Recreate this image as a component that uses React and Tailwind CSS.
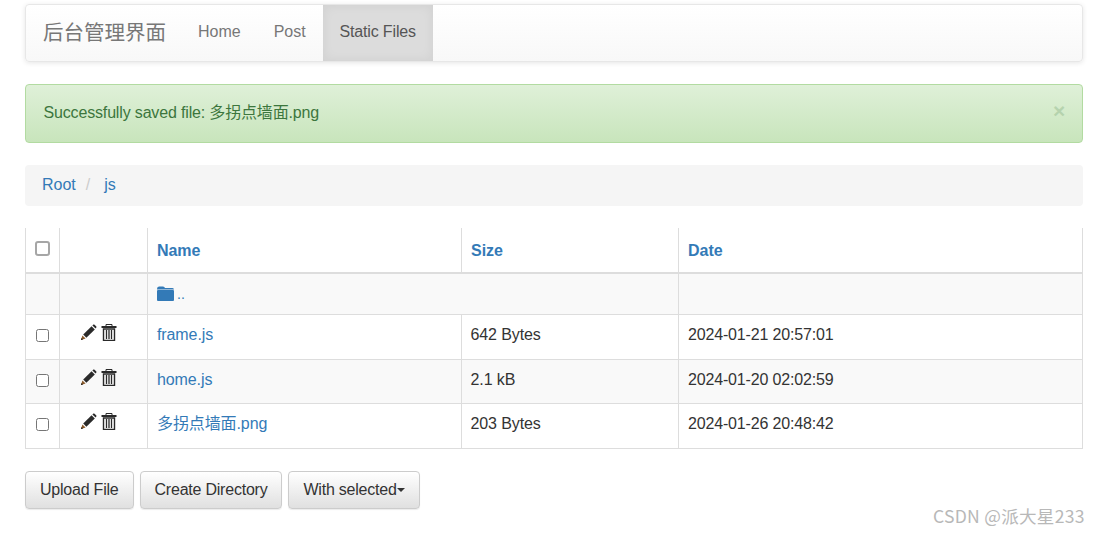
function Pencil() {
  return (
    <svg width="17" height="17" viewBox="0 0 17 17" className="block">
      <path d="M1 16 L2.4 11.4 L5.6 14.6 Z" fill="#8a5a2b" />
      <path d="M1 16 L1.6 14 L3 15.4 Z" fill="#111" />
      <path d="M3.2 10.6 L11.6 2.2 L14.8 5.4 L6.4 13.8 Z" fill="#2a2a2a" />
      <path d="M12.4 1.4 L13.4 0.6 Q14 0.2 14.6 0.7 L16.3 2.4 Q16.8 3 16.3 3.6 L15.6 4.6 Z" fill="#2a2a2a" />
    </svg>
  );
}

function Trash() {
  return (
    <svg width="16" height="17" viewBox="0 0 16 17" className="block">
      <path d="M5 2 V0.5 H11 V2" fill="none" stroke="#2a2a2a" strokeWidth="1" />
      <rect x="0.5" y="2" width="15" height="2" fill="#2a2a2a" />
      <path d="M2.5 5 H13.5 V16.5 H2.5 Z" fill="none" stroke="#2a2a2a" strokeWidth="1.4" />
      <path d="M5.5 6 V15 M8 6 V15 M10.5 6 V15" stroke="#2a2a2a" strokeWidth="1.3" />
    </svg>
  );
}

function Folder() {
  return (
    <svg width="17" height="15" viewBox="0 0 17 15" className="block">
      <path d="M0 3 Q0 0.5 2 0.5 H6 Q7.5 0.5 8 2 H15.5 Q17 2 17 3.5 H0 Z" fill="#337ab7" />
      <rect x="0" y="4" width="17" height="11" rx="1" fill="#337ab7" />
    </svg>
  );
}

function Check({ big }) {
  return (
    <input
      type="checkbox"
      className={
        big
          ? "block appearance-none w-[15px] h-[15px] rounded-[3px] border-2 border-[#a6a6a6] bg-white mx-auto"
          : "block appearance-none w-[13px] h-[13px] rounded-[2.5px] border border-[#767676] bg-white mx-auto"
      }
    />
  );
}

function Row({ name, size, date, striped, height, textPad }) {
  return (
    <tr className={striped ? "bg-[#f9f9f9]" : "bg-white"} style={{ height }}>
      <td className="border border-[#dddddd] align-middle pb-[2px]"><Check /></td>
      <td className="border border-[#dddddd] align-middle">
        <div className="flex justify-center gap-[4px] -mt-[8px] pr-[11px]">
          <Pencil />
          <Trash />
        </div>
      </td>
      <td className={"border border-[#dddddd] align-middle px-[9px] text-[#337ab7] tracking-[-0.1px] " + textPad}>{name}</td>
      <td className={"border border-[#dddddd] align-middle px-[8.5px] tracking-[-0.1px] " + textPad}>{size}</td>
      <td className={"border border-[#dddddd] align-middle px-[9px] tracking-[-0.16px] " + textPad}>{date}</td>
    </tr>
  );
}

function Btn({ children }) {
  return (
    <button className="h-[38px] px-[14px] rounded-[4px] border border-[#cccccc] text-[16px] tracking-[-0.22px] text-[#333333] bg-gradient-to-b from-white to-[#e0e0e0] shadow-[0_1px_1px_rgba(0,0,0,0.08)] flex items-center">
      {children}
    </button>
  );
}

export default function App() {
  return (
    <div
      className="relative w-[1100px] h-[534px] overflow-hidden bg-white px-[25px] pt-[4px] text-[16px] text-[#333333]"
      style={{ fontFamily: '"Liberation Sans", "Noto Sans CJK SC", sans-serif' }}
    >
      <div className="w-[1058px]">
        <nav className="h-[58px] flex rounded-[4px] border border-[#e7e7e7] bg-gradient-to-b from-white to-[#f8f8f8] shadow-[0_1px_5px_rgba(0,0,0,0.1)] overflow-hidden">
          <a className="pl-[17px] pr-[15px] text-[20.5px] text-[#777777] flex items-center">后台管理界面</a>
          <a className="pl-[17px] pr-[16px] text-[#777777] flex items-center pb-[2px]">Home</a>
          <a className="px-[17px] text-[#777777] flex items-center pb-[2px]">Post</a>
          <a className="w-[110px] justify-center text-[#555555] tracking-[-0.16px] flex items-center pb-[2px] bg-[#dcdcdc] shadow-[inset_0_0_12px_rgba(0,0,0,0.06)]">Static Files</a>
        </nav>

        <div className="relative mt-[22px] h-[59px] rounded-[4px] border border-[#b2dba1] bg-gradient-to-b from-[#dff0d8] to-[#c8e5bc] flex items-center pl-[17.5px] pb-[2px] tracking-[-0.16px] text-[#3c763d]">
          Successfully saved file: 多拐点墙面.png
          <span className="absolute right-[17px] top-[15px] text-[21px] leading-[21px] font-bold text-[#3c763d] opacity-20">×</span>
        </div>

        <div className="mt-[22px] h-[41px] rounded-[4px] bg-[#f5f5f5] flex items-center px-[17px] pb-[2px] text-[#337ab7]">
          <span>Root</span>
          <span className="text-[#cccccc] pl-[10px] pr-[14px]">/</span>
          <span>js</span>
        </div>

        <table className="mt-[22px] w-[1058px] border-collapse table-fixed">
          <colgroup>
            <col className="w-[34px]" />
            <col className="w-[88px]" />
            <col className="w-[314px]" />
            <col className="w-[217px]" />
            <col />
          </colgroup>
          <thead>
            <tr className="h-[45px]">
              <th className="border-x border-[#dddddd] border-b-2 align-middle pb-[4px]"><Check big /></th>
              <th className="border-x border-[#dddddd] border-b-2"></th>
              <th className="border-x border-[#dddddd] border-b-2 text-left px-[9px] pt-[2px] text-[#337ab7] font-bold tracking-[-0.1px]">Name</th>
              <th className="border-x border-[#dddddd] border-b-2 text-left px-[9px] pt-[2px] text-[#337ab7] font-bold">Size</th>
              <th className="border-x border-[#dddddd] border-b-2 text-left px-[9px] pt-[2px] text-[#337ab7] font-bold">Date</th>
            </tr>
          </thead>
          <tbody>
            <tr className="h-[41px] bg-[#f9f9f9]">
              <td className="border border-[#dddddd]"></td>
              <td className="border border-[#dddddd]"></td>
              <td colSpan={2} className="border border-[#dddddd] px-[9px] align-middle text-[#337ab7]">
                <div className="flex items-end gap-[3px] -mt-[1px]">
                  <Folder />
                  <span className="text-[14px] leading-[14px]">..</span>
                </div>
              </td>
              <td className="border border-[#dddddd]"></td>
            </tr>
            <Row name="frame.js" size="642 Bytes" date="2024-01-21 20:57:01" height="45px" textPad="pb-[4px]" />
            <Row name="home.js" size="2.1 kB" date="2024-01-20 02:02:59" striped height="44px" textPad="pb-[2px]" />
            <Row name="多拐点墙面.png" size="203 Bytes" date="2024-01-26 20:48:42" height="45px" textPad="pb-[4px]" />
          </tbody>
        </table>

        <div className="mt-[22px] flex gap-[6px]">
          <Btn>Upload File</Btn>
          <Btn>Create Directory</Btn>
          <Btn>
            With selected
            <span className="inline-block w-0 h-0 border-x-[4px] border-x-transparent border-t-[4px] border-t-[#333333]"></span>
          </Btn>
        </div>
      </div>

      <div
        className="absolute left-[933px] top-[504px] text-[17.6px] tracking-[0.25px] leading-[24px] text-[#b8b8b8] whitespace-nowrap"
        style={{ fontFamily: '"Noto Sans CJK SC", sans-serif' }}
      >
        CSDN @派大星233
      </div>
    </div>
  );
}
